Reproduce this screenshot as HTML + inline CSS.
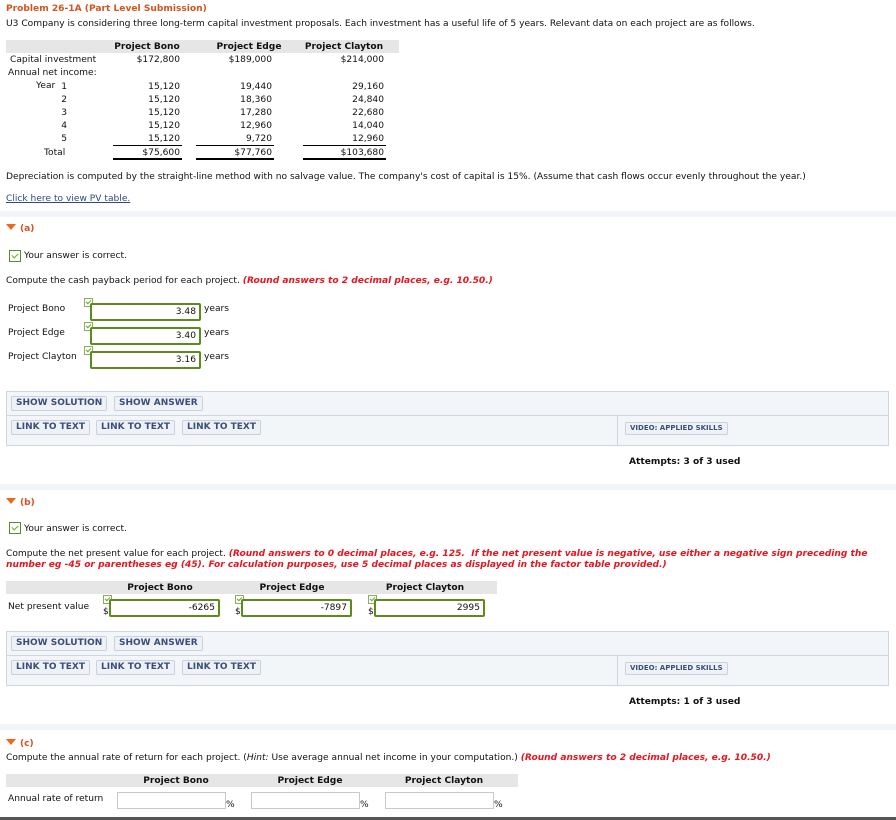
<!DOCTYPE html>
<html><head><meta charset="utf-8"><style>
*{margin:0;padding:0;box-sizing:border-box}
body{width:896px;height:820px;background:#fff;font-family:"DejaVu Sans","Liberation Sans",sans-serif;font-size:9.1px;color:#111;position:relative;overflow:hidden}
.a{position:absolute;white-space:nowrap;margin-top:1px}
.b{font-weight:bold}
.r{text-align:right}
.c{text-align:center}
.ttl{color:#d3541f;font-weight:bold}
.red{color:#e8141e;font-weight:bold;font-style:italic}
.band{position:absolute;left:0;width:896px;height:6px;background:#f1f4f8}
.tri{display:inline-block;width:0;height:0;border-left:5px solid transparent;border-right:5px solid transparent;border-top:6px solid #f0671c;margin-right:4px;vertical-align:1px}
.chk{position:absolute;width:12px;height:12px;border:1.5px solid #5a8a1e;background:#fff}
.chk:after{content:"";position:absolute;left:3px;top:1px;width:3px;height:5px;border:solid #6aa030;border-width:0 1.3px 1.3px 0;transform:rotate(45deg)}
.schk{position:absolute;width:9px;height:9px;border:1px solid #8aae5a;background:#fff}
.schk:after{content:"";position:absolute;left:2px;top:0;width:2px;height:4px;border:solid #6aa030;border-width:0 1px 1px 0;transform:rotate(45deg)}
.inp{position:absolute;border:2px solid #5c8a1d;border-radius:2px;background:#fff;text-align:right;padding-right:3px;font-size:9.1px;line-height:15px;height:18px}
.einp{position:absolute;border:1px solid #c8c8c8;background:#fff;height:17px}
.panel{position:absolute;left:6px;width:883px;background:#f3f6f9;border:1px solid #cfd6df}
.btn{position:absolute;border:1px solid #c9d1dc;border-radius:2px;background:#eef2f7;color:#3a4f78;font-weight:bold;font-size:9px;padding:0 4px;line-height:13px;height:15px}
.sbtn{font-size:7px;line-height:11px;height:13px}
.hd{position:absolute;background:#e6e6e6;height:13px}
.ln{position:absolute;height:1px;background:#000}
a{color:#2a4a80;text-decoration:underline}
</style></head><body>
<div class="a ttl" style="left:6px;top:3px">Problem 26-1A (Part Level Submission)</div>
<div class="a" style="left:6px;top:18px">U3 Company is considering three long-term capital investment proposals. Each investment has a useful life of 5 years. Relevant data on each project are as follows.</div>

<div class="hd" style="left:6px;top:40px;width:393px"></div>
<div class="a b c" style="left:107px;top:41px;width:80px">Project Bono</div>
<div class="a b c" style="left:209px;top:41px;width:80px">Project Edge</div>
<div class="a b c" style="left:298px;top:41px;width:92px">Project Clayton</div>
<div class="a" style="left:10px;top:54px">Capital investment</div>
<div class="a r" style="left:100px;top:54px;width:80px">$172,800</div>
<div class="a r" style="left:192px;top:54px;width:80px">$189,000</div>
<div class="a r" style="left:304px;top:54px;width:80px">$214,000</div>
<div class="a" style="left:8px;top:67px">Annual net income:</div>
<div class="a" style="left:36px;top:80px">Year</div>
<div class="a r" style="left:50px;top:80px;width:17px;line-height:13px">1<br>2<br>3<br>4<br>5</div>
<div class="a r" style="left:100px;top:80px;width:80px;line-height:13px">15,120<br>15,120<br>15,120<br>15,120<br>15,120</div>
<div class="a r" style="left:192px;top:80px;width:80px;line-height:13px">19,440<br>18,360<br>17,280<br>12,960<br>9,720</div>
<div class="a r" style="left:304px;top:80px;width:80px;line-height:13px">29,160<br>24,840<br>22,680<br>14,040<br>12,960</div>
<div class="ln" style="left:113px;top:145px;width:69px"></div>
<div class="ln" style="left:196px;top:145px;width:78px"></div>
<div class="ln" style="left:303px;top:145px;width:83px"></div>
<div class="a" style="left:44px;top:147px">Total</div>
<div class="a r" style="left:100px;top:147px;width:80px">$75,600</div>
<div class="a r" style="left:192px;top:147px;width:80px">$77,760</div>
<div class="a r" style="left:304px;top:147px;width:80px">$103,680</div>
<div class="ln" style="left:113px;top:158px;width:69px;height:2px"></div>
<div class="ln" style="left:196px;top:158px;width:78px;height:2px"></div>
<div class="ln" style="left:303px;top:158px;width:83px;height:2px"></div>
<div class="a" style="left:6px;top:171px">Depreciation is computed by the straight-line method with no salvage value. The company's cost of capital is 15%. (Assume that cash flows occur evenly throughout the year.)</div>
<div class="a" style="left:6px;top:193px"><a>Click here to view PV table.</a></div>

<div class="band" style="top:211px"></div>
<div class="a ttl" style="left:6px;top:223px"><span class="tri"></span>(a)</div>
<div class="chk" style="left:9px;top:250px"></div>
<div class="a" style="left:24px;top:250px">Your answer is correct.</div>
<div class="a" style="left:6px;top:275px">Compute the cash payback period for each project. <span class="red">(Round answers to 2 decimal places, e.g. 10.50.)</span></div>
<div class="a" style="left:8px;top:303px">Project Bono</div>
<div class="a" style="left:8px;top:327px">Project Edge</div>
<div class="a" style="left:8px;top:351px">Project Clayton</div>
<div class="schk" style="left:84px;top:298px"></div>
<div class="schk" style="left:84px;top:322px"></div>
<div class="schk" style="left:84px;top:346px"></div>
<div class="inp" style="left:90px;top:303px;width:111px">3.48</div>
<div class="inp" style="left:90px;top:327px;width:111px">3.40</div>
<div class="inp" style="left:90px;top:351px;width:111px">3.16</div>
<div class="a" style="left:204px;top:303px">years</div>
<div class="a" style="left:204px;top:327px">years</div>
<div class="a" style="left:204px;top:351px">years</div>

<div class="panel" style="top:391px;height:55px"></div>
<div style="position:absolute;left:7px;top:415px;width:881px;height:1px;background:#cfd6df"></div>
<div style="position:absolute;left:617px;top:416px;width:1px;height:29px;background:#cfd6df"></div>
<div class="btn" style="left:11px;top:396px">SHOW SOLUTION</div>
<div class="btn" style="left:114px;top:396px">SHOW ANSWER</div>
<div class="btn" style="left:11px;top:420px">LINK TO TEXT</div>
<div class="btn" style="left:96px;top:420px">LINK TO TEXT</div>
<div class="btn" style="left:182px;top:420px">LINK TO TEXT</div>
<div class="btn sbtn" style="left:625px;top:422px">VIDEO: APPLIED SKILLS</div>
<div class="a b" style="left:629px;top:456px">Attempts: 3 of 3 used</div>

<div class="band" style="top:484px"></div>
<div class="a ttl" style="left:6px;top:497px"><span class="tri"></span>(b)</div>
<div class="chk" style="left:9px;top:522px"></div>
<div class="a" style="left:24px;top:523px">Your answer is correct.</div>
<div class="a" style="left:6px;top:548px;line-height:11px">Compute the net present value for each project. <span class="red">(Round answers to 0 decimal places, e.g. 125.&nbsp; If the net present value is negative, use either a negative sign preceding the<br>number eg -45 or parentheses eg (45). For calculation purposes, use 5 decimal places as displayed in the factor table provided.)</span></div>
<div class="hd" style="left:6px;top:581px;width:491px"></div>
<div class="a b c" style="left:110px;top:582px;width:100px">Project Bono</div>
<div class="a b c" style="left:242px;top:582px;width:100px">Project Edge</div>
<div class="a b c" style="left:375px;top:582px;width:100px">Project Clayton</div>
<div class="a" style="left:8px;top:601px">Net present value</div>
<div class="schk" style="left:103px;top:595px"></div>
<div class="schk" style="left:235px;top:595px"></div>
<div class="schk" style="left:368px;top:595px"></div>
<div class="a" style="left:103px;top:606px">$</div>
<div class="a" style="left:235px;top:606px">$</div>
<div class="a" style="left:368px;top:606px">$</div>
<div class="inp" style="left:109px;top:599px;width:111px">-6265</div>
<div class="inp" style="left:241px;top:599px;width:111px">-7897</div>
<div class="inp" style="left:374px;top:599px;width:111px">2995</div>

<div class="panel" style="top:631px;height:55px"></div>
<div style="position:absolute;left:7px;top:655px;width:881px;height:1px;background:#cfd6df"></div>
<div style="position:absolute;left:617px;top:656px;width:1px;height:29px;background:#cfd6df"></div>
<div class="btn" style="left:11px;top:636px">SHOW SOLUTION</div>
<div class="btn" style="left:114px;top:636px">SHOW ANSWER</div>
<div class="btn" style="left:11px;top:660px">LINK TO TEXT</div>
<div class="btn" style="left:96px;top:660px">LINK TO TEXT</div>
<div class="btn" style="left:182px;top:660px">LINK TO TEXT</div>
<div class="btn sbtn" style="left:625px;top:662px">VIDEO: APPLIED SKILLS</div>
<div class="a b" style="left:629px;top:696px">Attempts: 1 of 3 used</div>

<div class="band" style="top:724px"></div>
<div class="a ttl" style="left:6px;top:738px"><span class="tri"></span>(c)</div>
<div class="a" style="left:6px;top:752px">Compute the annual rate of return for each project. (<i>Hint:</i> Use average annual net income in your computation.) <span class="red">(Round answers to 2 decimal places, e.g. 10.50.)</span></div>
<div class="hd" style="left:6px;top:774px;width:512px"></div>
<div class="a b c" style="left:126px;top:775px;width:100px">Project Bono</div>
<div class="a b c" style="left:260px;top:775px;width:100px">Project Edge</div>
<div class="a b c" style="left:394px;top:775px;width:100px">Project Clayton</div>
<div class="a" style="left:8px;top:793px">Annual rate of return</div>
<div class="einp" style="left:117px;top:792px;width:109px"></div>
<div class="einp" style="left:251px;top:792px;width:109px"></div>
<div class="einp" style="left:385px;top:792px;width:109px"></div>
<div class="a" style="left:226px;top:799px">%</div>
<div class="a" style="left:360px;top:799px">%</div>
<div class="a" style="left:494px;top:799px">%</div>
<div style="position:absolute;left:0;top:817px;width:896px;height:3px;background:#555"></div>
</body></html>
